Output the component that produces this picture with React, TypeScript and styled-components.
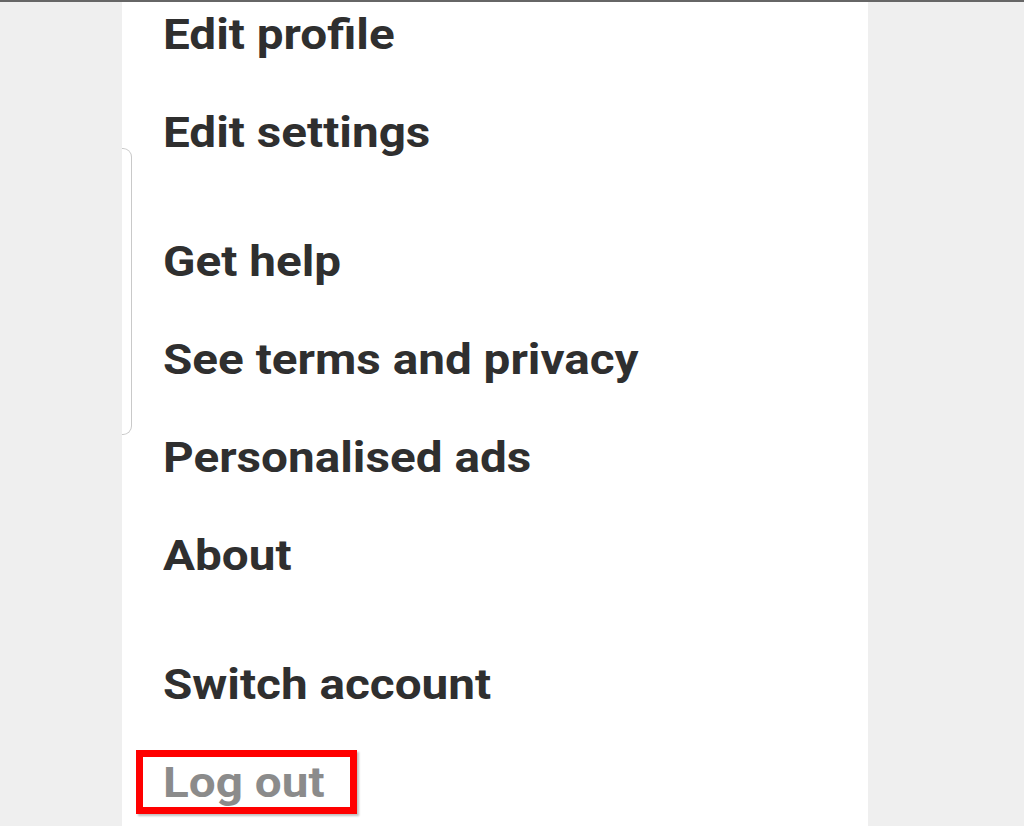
import React from 'react';
import styled, { createGlobalStyle } from 'styled-components';

const GlobalStyle = createGlobalStyle`
	html, body {
		margin: 0;
		padding: 0;
		background: #efefef;
	}
	body {
		font-family: Roboto, 'Noto Sans', 'Liberation Sans', sans-serif;
		-webkit-font-smoothing: antialiased;
	}
`;

const groups: { label: string; muted?: boolean; highlighted?: boolean }[][] = [
	[{ label: 'Edit profile' }, { label: 'Edit settings' }],
	[
		{ label: 'Get help' },
		{ label: 'See terms and privacy' },
		{ label: 'Personalised ads' },
		{ label: 'About' },
	],
	[{ label: 'Switch account' }, { label: 'Log out', muted: true, highlighted: true }],
];

const App = () => {
	return (
		<>
			<GlobalStyle />
			<Screen>
				<Stage>
					<Panel>
						<EdgeHint />
						<MenuList>
							{groups.map((group, gi) => (
								<Group key={gi}>
									{group.map((item) => (
										<MenuItem key={item.label} muted={item.muted}>
											<Label>{item.label}</Label>
											{item.highlighted && <Highlight />}
										</MenuItem>
									))}
								</Group>
							))}
						</MenuList>
					</Panel>
				</Stage>
				<BottomEdge />
			</Screen>
		</>
	);
};

const Screen = styled.div`
	width: 1024px;
	height: 826px;
	display: flex;
	flex-direction: column;
	border-top: 2px solid #666666;
	box-sizing: border-box;
	background: #efefef;
	overflow: hidden;
`;

const Stage = styled.div`
	flex: 0 0 820px;
	display: flex;
	padding-left: 122px;
`;

const Panel = styled.div`
	position: relative;
	width: 746px;
	height: 100%;
	background: #ffffff;
	overflow: hidden;
`;

const EdgeHint = styled.div`
	position: absolute;
	left: 0;
	top: 146px;
	width: 9px;
	height: 285px;
	border: 1px solid #c9c9c9;
	border-left: none;
	border-radius: 0 9px 9px 0;
`;

const MenuList = styled.div`
	display: flex;
	flex-direction: column;
	gap: 31px;
	margin-top: -16px;
	padding-left: 41px;
`;

const Group = styled.div`
	display: flex;
	flex-direction: column;
`;

interface MenuItemProps {
	muted?: boolean;
}

const MenuItem = styled.div<MenuItemProps>`
	position: relative;
	height: 98px;
	line-height: 98px;
	font-size: 42px;
	font-weight: 700;
	white-space: nowrap;
	color: ${(props) => (props.muted ? '#8b8b8b' : '#2f2f2f')};
`;

// the source capture is stretched horizontally
const Label = styled.span`
	display: inline-block;
	transform: scaleX(1.135);
	transform-origin: left center;
`;

const Highlight = styled.span`
	position: absolute;
	left: -27px;
	top: 16px;
	width: 221px;
	height: 64px;
	box-sizing: border-box;
	border: 7px solid #ff0000;
	box-shadow: 2px 2px 2px rgba(0, 0, 0, 0.25);
`;

const BottomEdge = styled.div`
	flex: 1;
	border-top: 1px solid #e3e3e3;
	background: #f0f0f0;
`;

export default App;
